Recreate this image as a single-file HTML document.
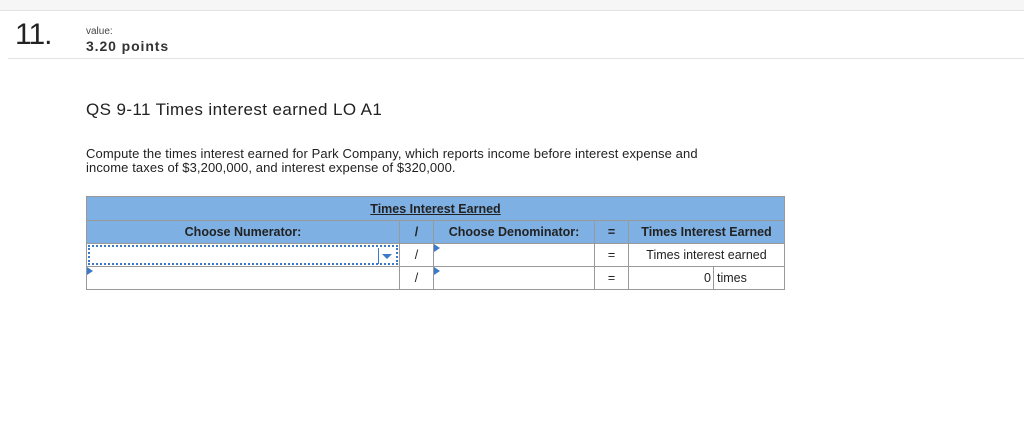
<!DOCTYPE html>
<html><head><meta charset="utf-8"><style>
body{margin:0;width:1024px;height:423px;background:#fff;font-family:"Liberation Sans",sans-serif;position:relative;overflow:hidden;color:#222}
.a{position:absolute}
table{position:absolute;left:86px;top:196px;border-collapse:collapse;font-size:12.5px}
td{border:1px solid #999;padding:0;text-align:center;height:22px}
.h td{background:#7eb0e3;font-weight:bold;color:#222}
.tri{position:absolute;width:0;height:0;border-top:4px solid transparent;border-bottom:4px solid transparent;border-left:6px solid #3b7ac9}
</style></head><body>
<div class="a" style="left:0;top:0;width:1024px;height:10px;background:#f6f6f6;border-bottom:1px solid #e3e3e3"></div>
<div class="a" style="left:15px;top:18px;font-size:30px;letter-spacing:-1px;color:#222">11.</div>
<div class="a" style="left:86px;top:26px;font-size:10px;color:#444">value:</div>
<div class="a" style="left:86px;top:38px;font-size:14px;font-weight:bold;letter-spacing:0.9px;color:#333">3.20 points</div>
<div class="a" style="left:8px;top:58px;width:1016px;height:1px;background:#e3e3e3"></div>
<div class="a" style="left:86px;top:100px;font-size:17px;letter-spacing:0.4px;color:#222">QS 9-11 Times interest earned LO A1</div>
<div class="a" style="left:86px;top:147px;font-size:13px;line-height:14px;color:#222;letter-spacing:0.1px">Compute the times interest earned for Park Company, which reports income before interest expense and<br>income taxes of $3,200,000, and interest expense of $320,000.</div>
<table>
<tr class="h"><td colspan="6" style="height:23px"><u>Times Interest Earned</u></td></tr>
<tr class="h"><td style="width:312px">Choose Numerator:</td><td style="width:33px">/</td><td style="width:160px">Choose Denominator:</td><td style="width:33px">=</td><td colspan="2" style="width:155px">Times Interest Earned</td></tr>
<tr><td style="position:relative"><div class="a" style="left:1px;top:1px;right:1px;bottom:1px;border:2px dotted #3b7ac9"></div><div class="a" style="right:20px;top:4px;width:1px;height:16px;background:#3b7ac9"></div><div class="a" style="right:7px;top:10px;border-left:5px solid transparent;border-right:5px solid transparent;border-top:5px solid #3b7ac9"></div></td><td>/</td><td style="position:relative"><div class="tri" style="left:0;top:0"></div></td><td>=</td><td colspan="2">Times interest earned</td></tr>
<tr><td style="position:relative"><div class="tri" style="left:0;top:0"></div></td><td>/</td><td style="position:relative"><div class="tri" style="left:0;top:0"></div></td><td>=</td><td style="text-align:right;padding-right:2px;width:82px">0</td><td style="text-align:left;padding-left:3px">times</td></tr>
</table>
</body></html>
